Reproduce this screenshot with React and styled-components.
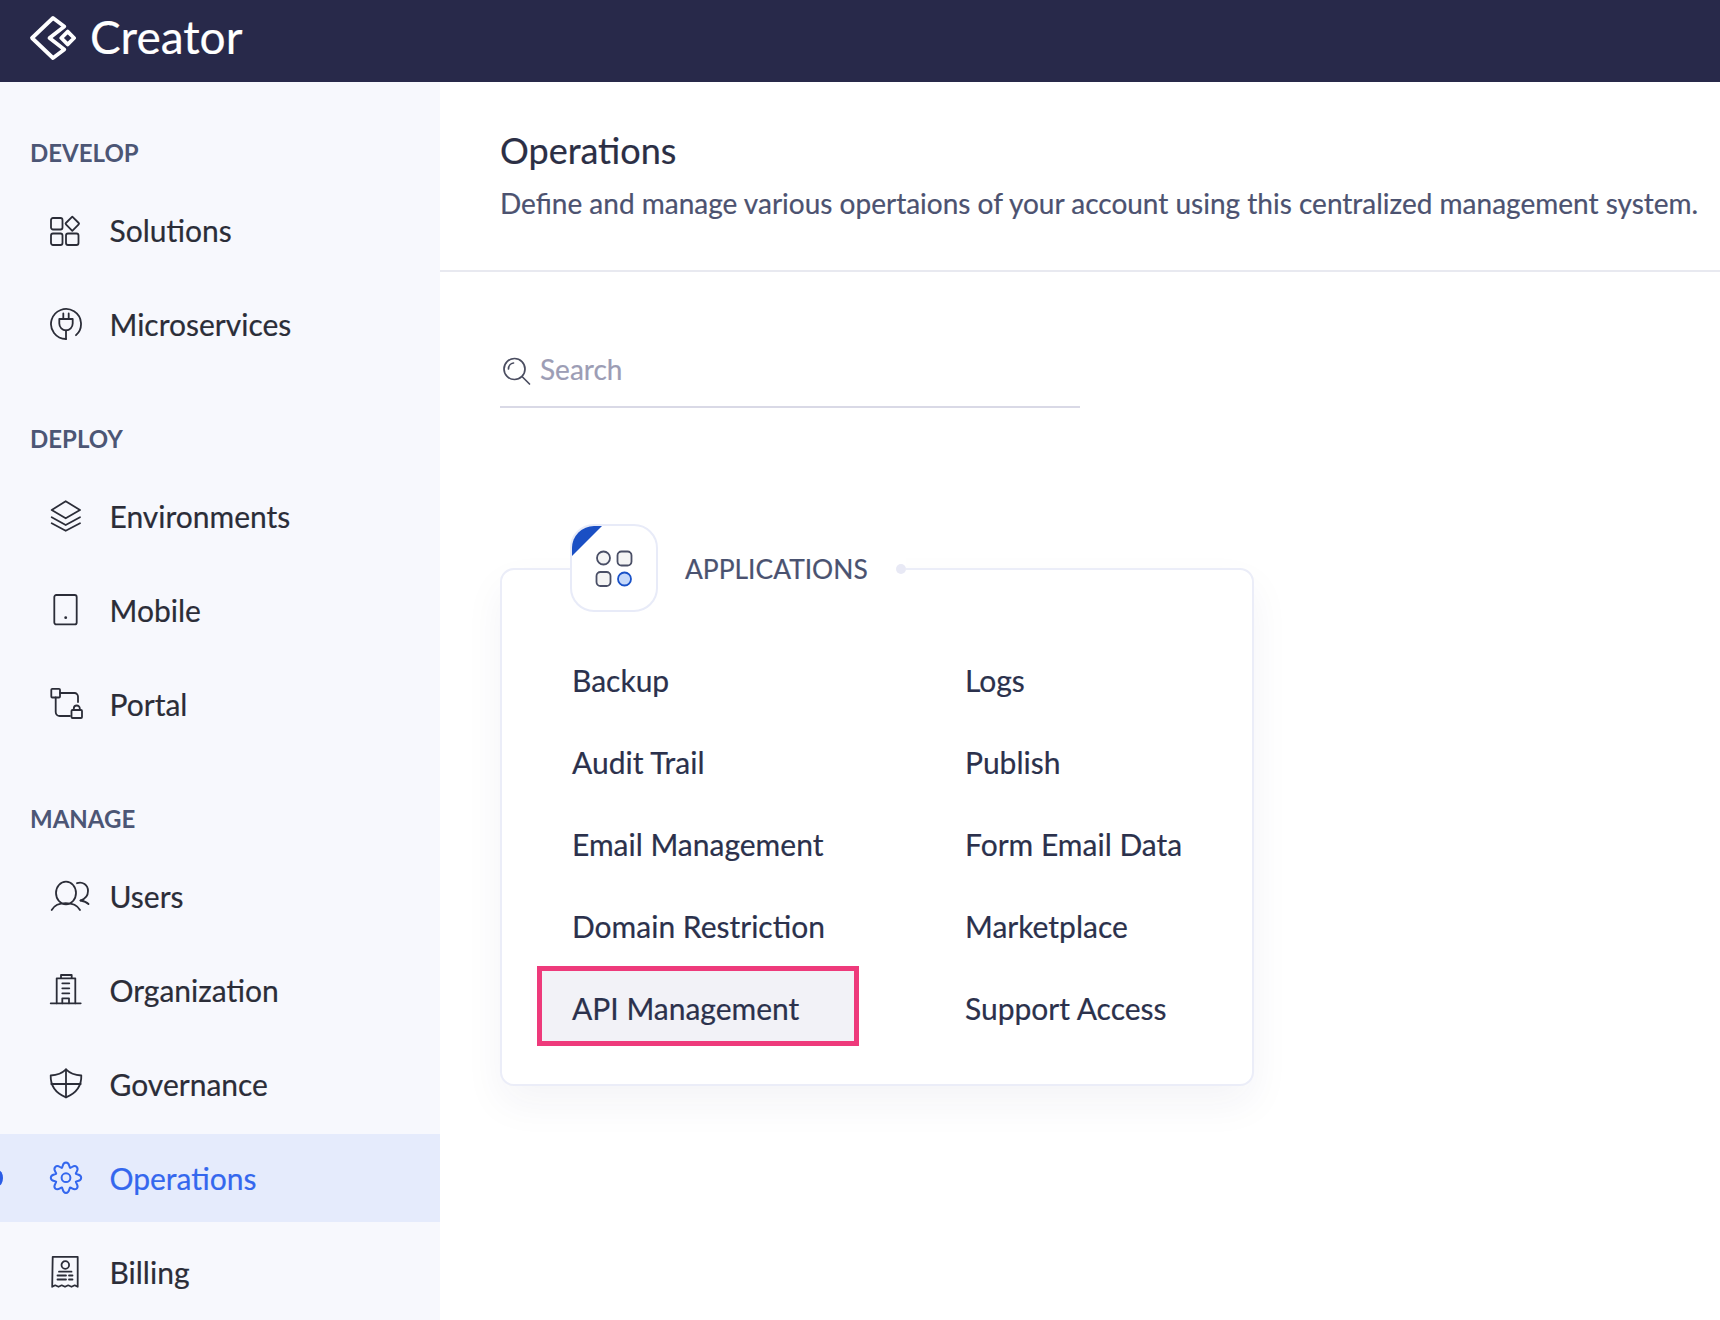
import React from "react";
import styled, { createGlobalStyle } from "styled-components";

const Global = createGlobalStyle`
  html, body { margin: 0; padding: 0; background: #fff; }
  * { box-sizing: border-box; }
  body {
    font-family: Lato, "Liberation Sans", sans-serif;
    text-rendering: optimizeLegibility;
    -webkit-text-stroke: 0.2px;
  }
`;

const Page = styled.div`
  width: 1720px;
  height: 1320px;
  overflow: hidden;
  display: flex;
  flex-direction: column;
`;
const TopBar = styled.header`
  height: 82px;
  flex: none;
  background: #28294a;
  display: flex;
  align-items: center;
  padding-left: 28px;
  gap: 14px;
  color: #fff;
`;
const Brand = styled.span`
  font-size: 46px;
  line-height: 74px;
  margin-top: -8px;
`;
const Logo = styled.svg`
  flex: none;
  margin-top: -2px;
`;
const Body = styled.div`
  flex: 1;
  display: flex;
  min-height: 0;
`;
const Sidebar = styled.nav`
  width: 440px;
  flex: none;
  background: #f7f8fd;
  padding-top: 54px;
  overflow: hidden;
  display: flex;
  flex-direction: column;
  gap: 53px;
`;
const Section = styled.section`
  display: flex;
  flex-direction: column;
`;
const SectionLabel = styled.h4`
  margin: 0 0 17px;
  padding-left: 30px;
  font-size: 24px;
  line-height: 34px;
  font-weight: 700;
  color: #4c5675;
  -webkit-text-stroke: 0;
`;
const Rows = styled.div`
  display: flex;
  flex-direction: column;
  gap: 6px;
`;
const Row = styled.div`
  position: relative;
  height: 88px;
  display: flex;
  align-items: center;
  padding-left: 48px;
  font-size: 30px;
  color: ${(p) => (p.$active ? "#3467ee" : "#2b2d38")};
  background: ${(p) => (p.$active ? "#e5ebfc" : "transparent")};
  ${(p) => p.$active && "margin: -1px 0 1px; padding-top: 2px;"}
`;
const RowText = styled.span`
  margin: -2px 0 0 -0.5px;
`;
const Marker = styled.span`
  position: absolute;
  left: -7px;
  top: 36px;
  width: 10px;
  height: 16px;
  border-radius: 50%;
  background: #2a5ce6;
`;
const IconSlot = styled.span`
  width: 62px;
  height: 36px;
  flex: none;
  display: flex;
  align-items: center;
`;
const Main = styled.main`
  flex: 1;
  min-width: 0;
  display: flex;
  flex-direction: column;
`;
const PageHead = styled.div`
  height: 190px;
  flex: none;
  padding: 43px 0 0 60px;
  border-bottom: 2px solid #e8e9f0;
`;
const Title = styled.h1`
  margin: 0;
  font-size: 36px;
  line-height: 50px;
  font-weight: 400;
  color: #2b2f45;
`;
const Subtitle = styled.p`
  margin: 5px 0 0;
  font-size: 28px;
  line-height: 46px;
  color: #4c5270;
  white-space: nowrap;
`;
const Content = styled.div`
  padding-left: 60px;
`;
const SearchBar = styled.div`
  width: 580px;
  height: 75px;
  margin-top: 61px;
  display: flex;
  align-items: center;
  gap: 6px;
  border-bottom: 2px solid #d9d9e6;
  font-size: 28px;
  color: #9c9db5;
`;
const SearchText = styled.span`
  margin-top: -1px;
`;
const Card = styled.div`
  position: relative;
  margin-top: 160px;
  width: 754px;
  height: 518px;
  border: 2px solid #ebedf8;
  border-radius: 14px;
  background: #fff;
  padding: 68px 0 0 35px;
  box-shadow: 0 18px 40px rgba(40, 45, 90, 0.05);
`;
const CardHead = styled.div`
  position: absolute;
  left: 68px;
  top: -46px;
  display: flex;
  align-items: center;
  gap: 27px;
  background: #fff;
`;
const AppBadge = styled.div`
  position: relative;
  width: 88px;
  height: 88px;
  border: 2px solid #e8ebf8;
  border-radius: 24px;
  overflow: hidden;
  display: flex;
  align-items: center;
  justify-content: center;
  background: #fff;
  &::before {
    content: "";
    position: absolute;
    left: 0;
    top: 0;
    width: 30px;
    height: 30px;
    background: #1a4fc4;
    clip-path: polygon(0 0, 100% 0, 0 100%);
  }
`;
const CardTitle = styled.span`
  font-size: 26.4px;
  color: #4a5270;
  margin-top: 1px;
`;
const Dot = styled.span`
  width: 10px;
  height: 10px;
  border-radius: 50%;
  background: #e8e9f5;
  margin: 2px 0 0 1px;
`;
const Grid = styled.div`
  display: grid;
  grid-template-columns: 322px 322px;
  column-gap: 71px;
  row-gap: 2px;
`;
const Item = styled.div`
  height: 80px;
  display: flex;
  align-items: center;
  padding: 4px 0 0 30px;
  font-size: 30px;
  color: #2b314c;
  border: 5px solid ${(p) => (p.$marked ? "#ee3a7b" : "transparent")};
  background: ${(p) => (p.$marked ? "#f2f2f7" : "transparent")};
`;

const Glyph = ({ children, w = 40 }) => (
  <svg width={w} height="36" viewBox={`0 0 ${w} 36`} fill="none" stroke="#2b2d38" strokeWidth="1.8" strokeLinecap="round" strokeLinejoin="round">
    {children}
  </svg>
);

const gearPath = (() => {
  const c = { x: 18, y: 16.7 };
  const pt = (r, deg) => {
    const a = (deg * Math.PI) / 180;
    return `${(c.x + r * Math.cos(a)).toFixed(2)} ${(c.y + r * Math.sin(a)).toFixed(2)}`;
  };
  let d = `M${pt(10.6, -112.5)}`;
  for (let i = 0; i < 8; i++) {
    const a = -90 + i * 45;
    d += `C${pt(11.6, a - 14)} ${pt(15.6, a - 14)} ${pt(15.2, a)}`;
    d += `C${pt(15.6, a + 14)} ${pt(11.6, a + 14)} ${pt(10.6, a + 22.5)}`;
  }
  return d + "Z";
})();

const icons = {
  solutions: (
    <Glyph>
      <rect x="3" y="5" width="11.5" height="11.5" rx="2" />
      <rect x="3" y="20.5" width="11.5" height="11.5" rx="2" />
      <rect x="18" y="20.5" width="12.5" height="11.5" rx="2" />
      <path d="M24.3 3.6l6.4 6.4a1 1 0 0 1 0 1.4l-6.4 6.4-6.4-6.4a1 1 0 0 1 0-1.4z" />
    </Glyph>
  ),
  micro: (
    <Glyph>
      <path d="M18 32A15 15 0 1 1 28 28.2" />
      <path d="M11.3 12h13.4v4.6a6.7 6.7 0 0 1-13.4 0z" />
      <path d="M15.3 6.5V12M20.7 6.5V12M18 23.3V32" />
    </Glyph>
  ),
  layers: (
    <Glyph>
      <path d="M17.7 2.2L32 11l-14.3 8.3L3.7 11z" />
      <path d="M3.7 18.3l14 7.7 14.3-7.7" />
      <path d="M3.7 24.3l14 7.5 14.3-7.5" />
    </Glyph>
  ),
  mobile: (
    <Glyph>
      <rect x="6.3" y="2" width="22.4" height="29.4" rx="2" />
      <circle cx="17.7" cy="24.7" r="1.4" fill="#2b2d38" stroke="none" />
    </Glyph>
  ),
  portal: (
    <Glyph>
      <rect x="3.3" y="1.8" width="8.7" height="8.7" rx="1" />
      <path d="M12 6h14.5a3.5 3.5 0 0 1 3.5 3.5V15" />
      <path d="M7.7 10.5V25a4 4 0 0 0 4 4H22" />
      <rect x="23.5" y="23" width="10.5" height="8" rx="1" />
      <path d="M25.8 23v-1.5a3 3 0 0 1 6 0V23" />
    </Glyph>
  ),
  users: (
    <Glyph w={48}>
      <ellipse cx="18" cy="14" rx="10" ry="11.3" />
      <path d="M3.7 31c2.5-4.3 8-6.8 14-6.8S29.500 26.700 32 31" />
      <path d="M29 4.200c5.500-2 11 1.800 11 7.800 0 4.500-3 8-7.500 9.500" />
      <path d="M32.500 21.500c3 .5 6 1.500 8 3.500" />
    </Glyph>
  ),
  org: (
    <Glyph>
      <path d="M8.700 30.300V5.300h18.600v25M13 5.300V2h10.700v3.300" />
      <path d="M2.700 30.300h30" />
      <path d="M14.300 10.300h7M14.300 15.300h7M14.300 20.300h7" />
      <path d="M14.300 30.300v-5h6.700v5" />
    </Glyph>
  ),
  gov: (
    <Glyph>
      <path d="M18 2.300c3.500 3.500 9.500 5.800 15.300 6.200.3 10-4.500 17.500-15.300 21.800C7.200 26 2.400 18.500 2.700 8.500 8.500 8.100 14.500 5.800 18 2.300z" />
      <path d="M18 2.300v28M3.300 17h29.400" />
    </Glyph>
  ),
  billing: (
    <Glyph>
      <path d="M4.700 1.800h25v30l-3-1.500-3.200 1.500-3.300-1.500-3.200 1.500-3.300-1.500-3.200 1.500-3.300-1.500-3 1.500z" />
      <circle cx="17.300" cy="10" r="3.800" />
      <path d="M11 16.700h12.500" />
      <path d="M9.500 20.500h8.500M21 20.500h3.500M9.500 24.500h8.500M21 24.500h3.500" />
    </Glyph>
  ),
  gear: (
    <svg width="40" height="36" viewBox="0 0 40 36" fill="none" stroke="#3467ee" strokeWidth="2" strokeLinejoin="round">
      <path d={gearPath} />
      <circle cx="18" cy="16.700" r="4.400" />
    </svg>
  ),
};

const nav = [
  { label: "DEVELOP", rows: [["Solutions", "solutions"], ["Microservices", "micro"]] },
  { label: "DEPLOY", rows: [["Environments", "layers"], ["Mobile", "mobile"], ["Portal", "portal"]] },
  { label: "MANAGE", rows: [["Users", "users"], ["Organization", "org"], ["Governance", "gov"], ["Operations", "gear", true], ["Billing", "billing"]] },
];

const items = [
  "Backup", "Logs", "Audit Trail", "Publish", "Email Management", "Form Email Data",
  "Domain Restriction", "Marketplace", "API Management", "Support Access",
];

const App = () => (
  <Page>
    <Global />
    <TopBar>
      <Logo width="48" height="50" viewBox="0 0 48 50" fill="none" stroke="#fff" strokeWidth="3.800" strokeLinejoin="round">
        <path d="M25 3L4 23 25 43 36.300 34.500 21.500 23 36.300 11.500z" />
        <path d="M39.700 16.600l6.400 6.400-6.400 6.400-6.400-6.400z" />
      </Logo>
      <Brand>Creator</Brand>
    </TopBar>
    <Body>
      <Sidebar>
        {nav.map((s) => (
          <Section key={s.label}>
            <SectionLabel>{s.label}</SectionLabel>
            <Rows>
              {s.rows.map(([label, icon, active]) => (
                <Row key={label} $active={active}>
                  {active && <Marker />}
                  <IconSlot>{icons[icon]}</IconSlot>
                  <RowText>{label}</RowText>
                </Row>
              ))}
            </Rows>
          </Section>
        ))}
      </Sidebar>
      <Main>
        <PageHead>
          <Title>Operations</Title>
          <Subtitle>Define and manage various opertaions of your account using this centralized management system.</Subtitle>
        </PageHead>
        <Content>
          <SearchBar>
            <svg width="34" height="36" viewBox="0 0 34 36" fill="none" stroke="#4a4d60" strokeWidth="1.700" strokeLinecap="round">
              <circle cx="14.500" cy="17" r="10.500" />
              <path d="M22.500 25l7 7" />
              <path d="M8.500 17a6 6 0 0 1 5-6" />
            </svg>
            <SearchText>Search</SearchText>
          </SearchBar>
          <Card>
            <CardHead>
              <AppBadge>
                <svg width="40" height="40" viewBox="0 0 40 40" strokeWidth="1.800">
                  <circle cx="9.500" cy="10" r="6.500" fill="#f4f4f4" stroke="#4a4f66" />
                  <rect x="23.500" y="3.500" width="14" height="14" rx="4" fill="#f4f4f4" stroke="#4a4f66" />
                  <rect x="2.500" y="24" width="14" height="14" rx="4" fill="#f4f4f4" stroke="#4a4f66" />
                  <circle cx="30.500" cy="31" r="6.500" fill="#c5d8fa" stroke="#1a52c8" />
                </svg>
              </AppBadge>
              <CardTitle>APPLICATIONS</CardTitle>
              <Dot />
            </CardHead>
            <Grid>
              {items.map((t) => (
                <Item key={t} $marked={t === "API Management"}>{t}</Item>
              ))}
            </Grid>
          </Card>
        </Content>
      </Main>
    </Body>
  </Page>
);

export default App;
